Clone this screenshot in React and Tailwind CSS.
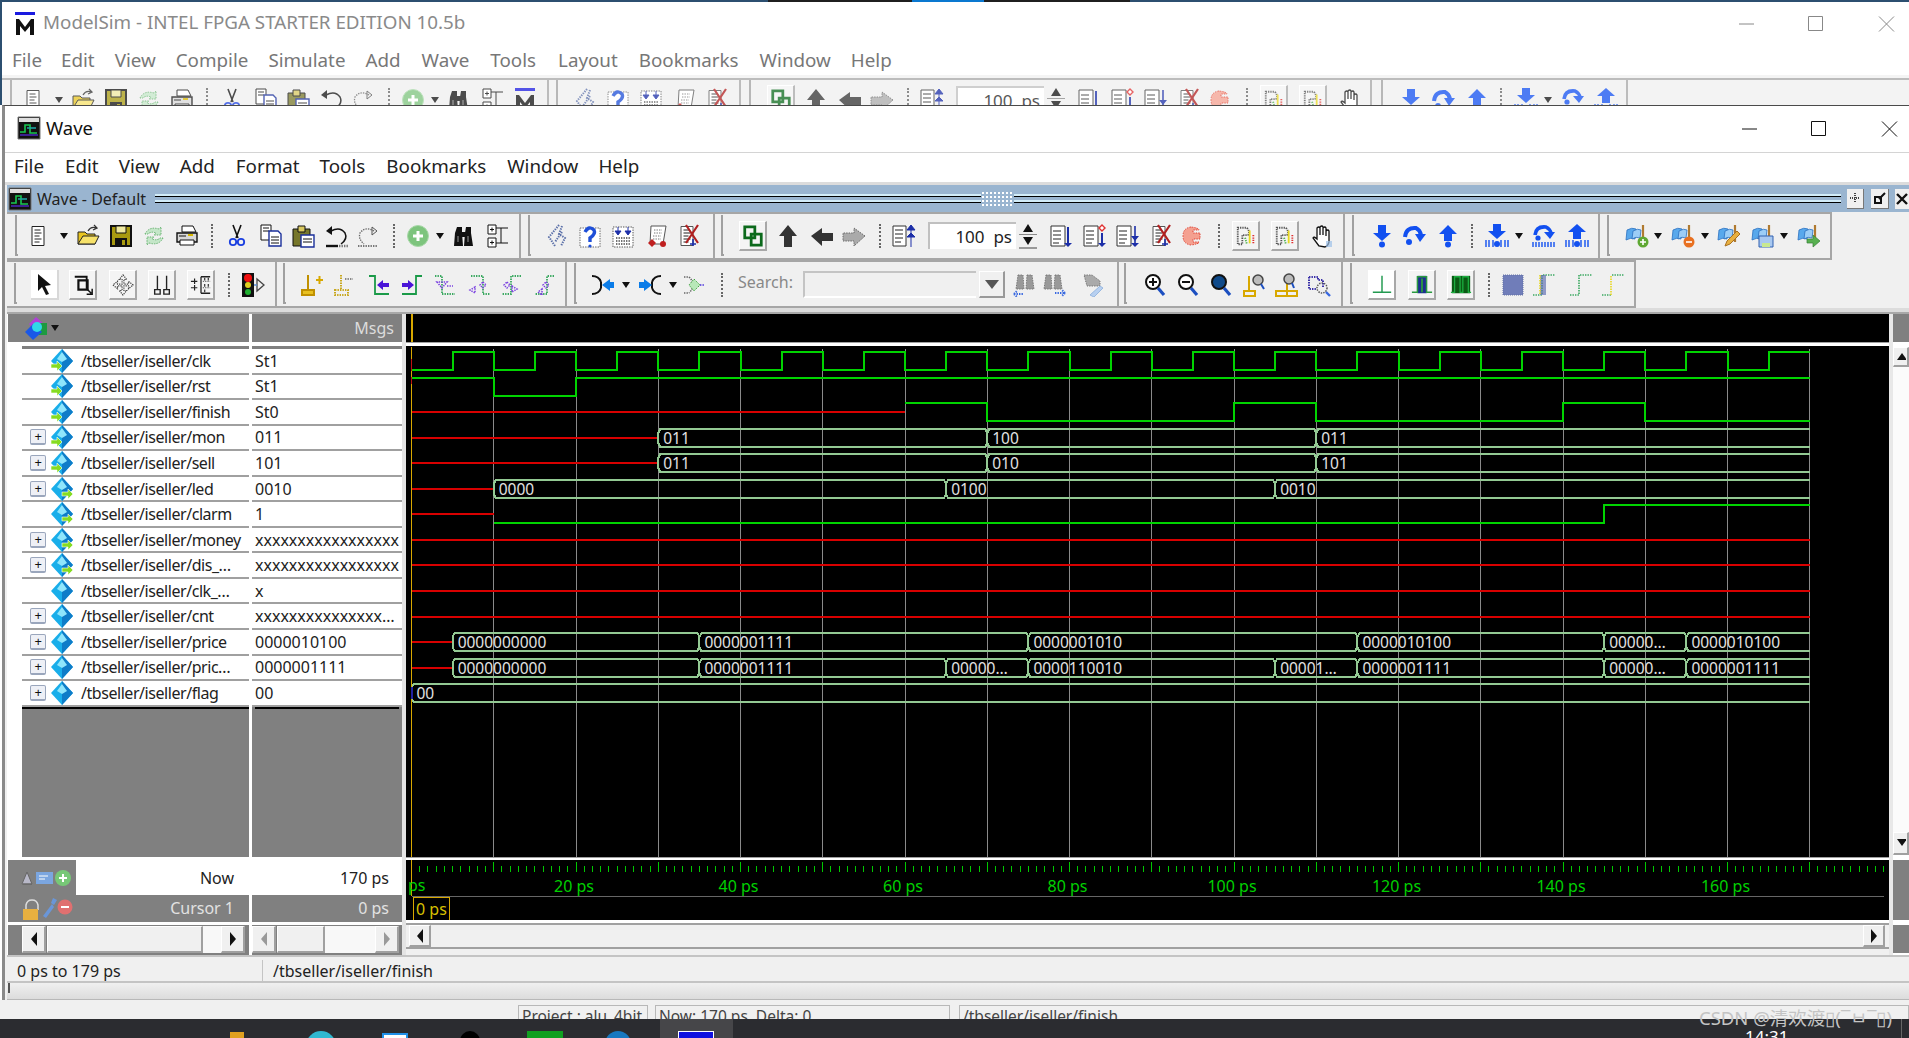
import React from "react";

const dot = { strokeDasharray: "1.4 1.1" };
const Doc = ({ s = "#222" }) => (
  <>
    <path d="M4 2.5h12v19H4z" fill="#fff" stroke={s} />
    <path d="M6.5 6h6M6.5 9h7M6.5 12h5M6.5 15h7M6.5 18h5" stroke="#222" />
  </>
);
const Dia = ({ a }) => (
  <>
    <path d="M12 0 23 12 12 24 1 12z" fill="#19aeea" />
    <path d="M12 0 23 12 12 24z" fill="#0f7cc8" />
    <path d="M12 3 17 10 12 13 7 10z" fill="#8fe6fc" />
    {a === "l" && <path d="M1 15h6v-3l5 5-5 5v-3H1z" fill="#86dc22" stroke="#fff" strokeWidth=".6" />}
    {a === "r" && <path d="M12 15h6v-3l5 5-5 5v-3h-6z" fill="#86dc22" stroke="#fff" strokeWidth=".6" />}
  </>
);
const FlagB = ({ children }) => (
  <>
    <path d="M2 6q5-3 9-1l-1 10q-4-2-9 1z" fill="#58a8ec" stroke="#2a70c0" strokeWidth=".8" />
    <path d="M8 7q5-3 8-1l-1 8q-4-2-8 1z" fill="#9ccdf6" stroke="#2a70c0" strokeWidth=".8" />
    <path d="M18 1v17" stroke="#b07a30" strokeWidth="2.2" />
    {children}
  </>
);
const Mag = ({ f = "#fff", k }) => (
  <>
    <circle cx="10" cy="9" r="7" fill={f} stroke="#111" strokeWidth="2" />
    <path d="m15 15 6 7" stroke="#1c4fc0" strokeWidth="3.2" />
    {k === "+" && <path d="M6 9h8M10 5v8" stroke="#111" strokeWidth="2" />}
    {k === "-" && <path d="M6 9h8" stroke="#111" strokeWidth="2" />}
  </>
);
const I = {
  doc: <Doc />,
  open: (
    <>
      <path d="M2 20V8h7l2 2h8v10z" fill="#e8c420" stroke="#222" />
      <path d="M2 20 7 12h16l-4 8z" fill="#f7e26a" stroke="#222" />
      <path d="M12 7q3-5 8-3m-2-3 3 3-4 2" stroke="#333" strokeWidth="1.3" />
    </>
  ),
  save: (
    <>
      <path d="M2 2h20v20H2z" fill="#a89a10" stroke="#111" strokeWidth="2" />
      <path d="M7 2h10v7H7z" fill="#efe9a0" stroke="#111" />
      <path d="M6 14h12v8H6z" fill="#111" />
      <path d="M13 16h3v5h-3z" fill="#a89a10" />
    </>
  ),
  reload: (
    <>
      <path d="M3 10q4-8 14-5l2-2v8h-7l2-2q-5-2-8 1zM21 14q-4 8-14 5l-2 2v-8h7l-2 2q5 2 8-1z" fill="#c4e6c8" stroke="#62b06c" style={dot} />
    </>
  ),
  print: (
    <>
      <path d="M7 2h11l3 6H7z" fill="#fff" stroke="#111" />
      <path d="M2 9h20v9H2z" fill="#d8d8d8" stroke="#111" strokeWidth="1.4" />
      <path d="M5 16h14v5H5z" fill="#fff" stroke="#111" />
      <path d="M13 11h5" stroke="#d8b800" strokeWidth="2" />
      <path d="M4 12h7" stroke="#111" />
    </>
  ),
  cut: (
    <>
      <path d="M8 1l5 13M16 1l-5 13" stroke="#111" strokeWidth="1.6" />
      <circle cx="8" cy="18" r="3.2" stroke="#1a3fe0" strokeWidth="1.8" />
      <circle cx="16" cy="18" r="3.2" stroke="#1a3fe0" strokeWidth="1.8" />
    </>
  ),
  copy: (
    <>
      <path d="M2 1h10v15H2z" fill="#fff" stroke="#111" />
      <path d="M4 4h6M4 7h6" stroke="#111" />
      <path d="M10 7h9l3 3v12H10z" fill="#fff" stroke="#1a2f9a" strokeWidth="1.4" />
      <path d="M12 13h8M12 16h8M12 19h8" stroke="#111" />
    </>
  ),
  paste: (
    <>
      <path d="M2 5h17v17H2z" fill="#77772a" stroke="#111" />
      <path d="M7 2h7v6H7z" fill="#d8c860" stroke="#111" />
      <path d="M10 11h13v12H10z" fill="#fff" stroke="#1a2f9a" strokeWidth="1.4" />
      <path d="M12 15h9M12 18h9" stroke="#111" />
    </>
  ),
  undo: (
    <>
      <path d="M6 7q9-5 14 2 3 6-4 11" stroke="#111" strokeWidth="1.5" />
      <path d="M7 2v9L1 7z" fill="#111" />
      <path d="M1 22h12" stroke="#111" strokeWidth="2.4" />
      <path d="M14 22h9" stroke="#777" strokeWidth="2.4" style={dot} />
    </>
  ),
  redo: (
    <>
      <path d="M18 7Q9 2 4 9q-2 6 4 11" stroke="#666" strokeWidth="1.3" style={dot} />
      <path d="m16 3 5 4-5 4z" stroke="#555" />
      <path d="M2 22h20" stroke="#777" strokeWidth="2" style={dot} />
    </>
  ),
  add: (
    <>
      <circle cx="12" cy="12" r="10.5" fill="#7dc47d" stroke="#a8d8a8" />
      <path d="M7 12h10M12 7v10" stroke="#fff" strokeWidth="3" />
    </>
  ),
  binoc: (
    <>
      <path d="M5 3h5v6l1 13H2l1-13zM14 3h5v6l2 13h-9l1-13z" fill="#111" />
      <path d="M10 8h4v5h-4z" fill="#111" />
      <path d="M6 12v6M16 12v6" stroke="#999" />
    </>
  ),
  group: (
    <>
      <path d="M3 1h8v9H3zM3 14h8v9H3z" fill="#fff" stroke="#111" />
      <path d="M5 5.5h4M7 3.5v4M5 18.5h4M7 16.5v4M11 4h12M11 19h12M16 4v15" stroke="#111" />
    </>
  ),
  sim: <path d="M13 1 3 13l6 9M16 8l-7 10M16 2l-3 8 6 4-4 8" stroke="#5a6fa8" strokeWidth="2" style={dot} />,
  q: (
    <>
      <path d="M2 4h20v19H2z" fill="#fff" stroke="#666" style={dot} />
      <path d="M7 8q4-7 9-2 2 4-4 8v4" stroke="#1e4fd8" strokeWidth="3.4" />
      <circle cx="12" cy="22" r="1.6" fill="#1e4fd8" />
    </>
  ),
  gridd: (
    <>
      <path d="M2 3h20v20H2z" fill="#fff" stroke="#555" style={dot} />
      <path d="M7 3v7M4 7l3 4 3-4zM17 3v7M14 7l3 4 3-4z" fill="#1c2fa8" stroke="#1c2fa8" />
      <path d="M5 14h15M5 17h15M5 20h15" stroke="#444" style={dot} strokeWidth="1.4" />
    </>
  ),
  docred: (
    <>
      <path d="M6 2h15l-3 18H5z" fill="#fff" stroke="#555" />
      <path d="M9 6h8M9 9h8M8 12h8M8 15h8" stroke="#777" style={dot} />
      <path d="M3 19l4-4 4 4-4 4z" fill="#c02020" />
      <circle cx="18" cy="20" r="3" fill="#c02020" />
    </>
  ),
  docx: (
    <>
      <Doc s="#555" />
      <path d="M9 1l12 18M21 1 9 19" stroke="#b02020" strokeWidth="2.2" />
      <path d="M16 15v7m-3-2h6" stroke="#1c2fa8" strokeWidth="1.6" />
    </>
  ),
  links: <path d="M3 2h11v12H3zM10 10h11v12H10z" stroke="#0c6a1c" strokeWidth="3" />,
  up: <path d="M12 1 21 12h-5v11H8V12H3z" fill="#333" />,
  left: <path d="M1 12 12 4v5h11v8H12v5z" fill="#333" />,
  right: <path d="M23 12 12 4v5H1v8h11v5z" fill="#aaa" stroke="#666" style={dot} />,
  docud: (
    <>
      <path d="M1 2h13v20H1z" fill="#fff" stroke="#333" />
      <path d="M3 6h8M3 10h8M3 14h8M3 18h6" stroke="#222" />
      <path d="M19 1v22M15 6l4-5 4 5zM15 13l4-4 4 4z" fill="#1c2fa8" stroke="#1c2fa8" />
    </>
  ),
  dl: (
    <>
      <path d="M1 2h14v20H1z" fill="#fff" stroke="#333" />
      <path d="M3 7h8M3 11h8M3 15h8M3 19h6" stroke="#222" />
      <path d="M18 3v19" stroke="#1c2fa8" strokeWidth="2" />
      <path d="M14 19h8l-4 4z" fill="#1c2fa8" />
    </>
  ),
  dr: (
    <>
      <path d="M1 2h14v20H1z" fill="#fff" stroke="#333" />
      <path d="M3 7h8M3 11h8M3 15h8M3 19h6" stroke="#222" />
      <path d="M19 9v13" stroke="#1c2fa8" strokeWidth="2" />
      <path d="M15 19h8l-4 4z" fill="#1c2fa8" />
      <path d="m19 1 3 3-3 3-3-3z" stroke="#e03030" fill="#fff" strokeWidth="1.4" />
    </>
  ),
  da: (
    <>
      <path d="M1 2h14v20H1z" fill="#fff" stroke="#333" />
      <path d="M3 7h8M3 11h8M3 15h8M3 19h6" stroke="#222" />
      <path d="M19 2v20" stroke="#1c2fa8" strokeWidth="1.6" />
      <path d="M15 12l4 5 4-5zM15 19l4 4 4-4z" fill="#1c2fa8" />
    </>
  ),
  redc: <path d="M12 3q-8 1-8 9t8 9q8-1 8-3h-6v-3h7V9h-7V6h6q0-2-8-3z" fill="#f4a090" stroke="#e04030" style={dot} />,
  dotgy: (
    <>
      <path d="M3 3h10q4 5 1 8H8v10H3z" stroke="#555" strokeWidth="2" style={dot} />
      <path d="M16 6v14" stroke="#e8d820" strokeWidth="2" />
      <path d="M20 11v10" stroke="#e03030" strokeWidth="2" style={dot} />
      <path d="M11 14l2 7" stroke="#50b050" strokeWidth="2" style={dot} />
    </>
  ),
  hand: (
    <>
      <path d="M8 22 2 14q1-2 4 1V4q2-2 3 0v7-8q2-2 3 0v8-7q2-2 3 0v8-5q2-2 3 0v11q-1 4-4 5z" fill="#fff" stroke="#111" strokeWidth="1.3" />
      <path d="M15 17h6v6h-6z" fill="#9cc0e8" opacity=".7" />
    </>
  ),
  stepd: (
    <>
      <path d="M8 1h8v8h5l-9 8-9-8h5z" fill="#1250f0" />
      <circle cx="12" cy="20.5" r="3" fill="#1250f0" />
    </>
  ),
  stepo: (
    <>
      <path d="M3 13Q4 3 14 4q4 2 5 7" stroke="#1250f0" strokeWidth="4" />
      <path d="M13 10h11l-6 8z" fill="#1250f0" />
      <circle cx="7" cy="18" r="3" fill="#1250f0" />
    </>
  ),
  stepu: (
    <>
      <path d="M12 1l9 9h-5v7H8v-7H3z" fill="#1250f0" />
      <circle cx="12" cy="20.5" r="3" fill="#1250f0" />
    </>
  ),
  stepdb: (
    <>
      <path d="M8 0h8v7h5l-9 8-9-8h5z" fill="#1250f0" />
      <circle cx="12" cy="20" r="3" fill="#1250f0" />
      <path d="M1 16v7M4 16v7M8 16v7M16 16v7M20 16v7M23 16v7" stroke="#1250f0" strokeWidth="1.4" />
    </>
  ),
  stepob: (
    <>
      <path d="M3 11Q4 2 14 3q4 2 5 6" stroke="#1250f0" strokeWidth="3.6" />
      <path d="M12 8h11l-5 7z" fill="#1250f0" />
      <circle cx="6" cy="14" r="2.6" fill="#1250f0" />
      <path d="M1 18v5M4 18v5M7 18v5M10 18v5M13 18v5M16 18v5M19 18v5M22 18v5" stroke="#1250f0" strokeWidth="1.4" />
    </>
  ),
  stepub: (
    <>
      <path d="M12 0l9 8h-5v7H8V8H3z" fill="#1250f0" />
      <circle cx="12" cy="20" r="3" fill="#1250f0" />
      <path d="M1 16v7M4 16v7M8 16v7M16 16v7M20 16v7M23 16v7" stroke="#1250f0" strokeWidth="1.4" />
    </>
  ),
  fadd: (
    <FlagB>
      <circle cx="18" cy="18" r="5.5" fill="#5ea832" />
      <path d="M15 18h6M18 15v6" stroke="#fff" strokeWidth="1.6" />
    </FlagB>
  ),
  fdel: (
    <FlagB>
      <circle cx="18" cy="18" r="5.5" fill="#e87020" />
      <path d="M15 18h6" stroke="#fff" strokeWidth="1.6" />
    </FlagB>
  ),
  fedit: (
    <FlagB>
      <path d="M8 22l2-5 10-10 3 3-10 10z" fill="#e8b040" stroke="#a87020" />
    </FlagB>
  ),
  fsave: (
    <FlagB>
      <path d="M8 12h14v11H8z" fill="#a8c8f0" stroke="#3060b0" />
      <path d="M11 19h8v4h-8z" fill="#c8e890" />
    </FlagB>
  ),
  fgo: (
    <FlagB>
      <path d="M10 15h6v-4l7 6-7 6v-4h-6z" fill="#58b050" stroke="#388038" strokeWidth=".7" />
    </FlagB>
  ),
  pointer: <path d="m6 2 0 17 4-4 4 8 3-1-4-8 6-1z" fill="#111" />,
  zbox: (
    <>
      <path d="M3 3h13v13" stroke="#111" strokeWidth="2" />
      <path d="M7 7h10v10H7z" stroke="#111" strokeWidth="2.4" />
      <path d="m16 16 5 5m1-5v6h-6" stroke="#111" strokeWidth="1.6" />
    </>
  ),
  move: <path d="m12 1 4 5h-3v5h5V8l5 4-5 4v-3h-5v5h3l-4 5-4-5h3v-5H6v3l-5-4 5-4v3h5V6H8z" stroke="#444" strokeWidth="1.3" style={dot} />,
  bars: <path d="M7 2v15M4 17h6v5H4zM17 2v15M14 17h6v5h-6z" stroke="#222" strokeWidth="1.5" />,
  cols: (
    <>
      <path d="M12 3h10M12 3v18M12 21h10" stroke="#222" strokeWidth="1.4" />
      <path d="M1 8h7M5 5v6M1 15h7M5 12v6" stroke="#222" strokeWidth="1.3" />
      <path d="M16 4v3M20 4v3M16 11v3M20 11v3M16 17v3" stroke="#444" strokeWidth="1.5" />
      <path d="M14 8h8M14 15h8" stroke="#444" style={dot} />
    </>
  ),
  traffic: (
    <>
      <path d="M1 0h12v24H1z" fill="#111" />
      <circle cx="7" cy="5" r="4" fill="#f01010" />
      <circle cx="7" cy="12" r="3" fill="#e0d020" />
      <circle cx="7" cy="19" r="3" fill="#20b030" />
      <path d="m16 6 7 6-7 6z" stroke="#444" strokeWidth="1.3" />
      <path d="M13 12h3" stroke="#6090d0" strokeWidth="1.6" />
    </>
  ),
  ins: (
    <>
      <path d="M8 2v15M2 17h12v5H2z" fill="#e8c020" stroke="#c09000" strokeWidth="2" />
      <path d="M16 7h7M19.5 3v8" stroke="#d8a800" strokeWidth="2" />
    </>
  ),
  insd: (
    <>
      <path d="M9 2v15M3 17h13v5H3z" stroke="#c8a820" strokeWidth="2" style={dot} />
      <path d="M13 6h8" stroke="#888" strokeWidth="2" style={dot} />
    </>
  ),
  bl: (
    <>
      <path d="M2 3h6v18h14" stroke="#1a9a48" strokeWidth="1.8" />
      <path d="M10 12l6-5v3h6v4h-6v3z" fill="#4a14d8" />
    </>
  ),
  br: (
    <>
      <path d="M22 3h-6v18H2" stroke="#1a9a48" strokeWidth="1.8" />
      <path d="M14 12l-6-5v3H2v4h6v3z" fill="#4a14d8" />
    </>
  ),
  d1: (
    <>
      <path d="M2 3h7v18h13" stroke="#3aa860" strokeWidth="1.8" style={dot} />
      <path d="m4 9 5 6 5-6zM14 13h6" stroke="#7a40e0" strokeWidth="1.6" style={dot} />
    </>
  ),
  d2: (
    <>
      <path d="M4 3h12v18h7" stroke="#3aa860" strokeWidth="1.8" style={dot} />
      <path d="m8 14-5 3 5 3zM16 9l3 3-3 3-3-3z" stroke="#7a40e0" strokeWidth="1.5" style={dot} />
    </>
  ),
  d3: (
    <>
      <path d="M21 3H11v18H2" stroke="#3aa860" strokeWidth="1.8" style={dot} />
      <path d="m12 13 5 3-5 3zM7 9l3 3-3 3-3-3z" stroke="#7a40e0" strokeWidth="1.5" style={dot} />
    </>
  ),
  d4: (
    <>
      <path d="M22 3h-7v18H3" stroke="#3aa860" strokeWidth="1.8" style={dot} />
      <path d="m14 9 3 3-3 3-3-3zM10 16l-4 3 4 3z" stroke="#7a40e0" strokeWidth="1.5" style={dot} />
    </>
  ),
  mergein: (
    <>
      <path d="M1 3q7 0 9 6M1 21q7 0 9-6M10 9v6" stroke="#111" strokeWidth="2" />
      <path d="M23 12l-8-6v3H11v6h4v3z" fill="#0a7ce8" transform="matrix(-1 0 0 1 34 0)" />
    </>
  ),
  mergeout: (
    <>
      <path d="M23 3q-7 0-9 6M23 21q-7 0-9-6M14 9v6" stroke="#111" strokeWidth="2" />
      <path d="M14 12 6 6v3H1v6h5v3z" fill="#0a7ce8" />
    </>
  ),
  dgreen: (
    <>
      <path d="M3 4h5M3 20h5M8 4q4 4 4 8t-4 8" stroke="#666" style={dot} strokeWidth="1.5" />
      <path d="m13 6 6 6-6 6-5-6z" fill="#b8e8b8" stroke="#40a040" style={dot} />
      <path d="M19 12h4" stroke="#7060e0" strokeWidth="2" style={dot} />
    </>
  ),
  bna: (
    <>
      <path d="M5 2h5l1 14H3zM14 2h5l2 14h-8z" fill="#999" stroke="#777" style={dot} />
      <path d="M1 21h9m-9 0 3-3m-3 3 3 3" stroke="#3868e0" strokeWidth="2" style={dot} />
    </>
  ),
  bnb: (
    <>
      <path d="M4 2h5l1 14H2zM13 2h5l2 14h-8z" fill="#999" stroke="#777" style={dot} />
      <path d="M13 20h10m0 0-3-3m3 3-3 3" stroke="#3868e0" strokeWidth="2" style={dot} />
    </>
  ),
  pen: (
    <>
      <path d="M4 2h8l8 6v5H7z" fill="#aaa" stroke="#777" style={dot} />
      <path d="M10 22l10-9 3 2-9 9z" fill="#b8d0f0" stroke="#98b8e0" />
    </>
  ),
  zin: <Mag k="+" />,
  zout: <Mag k="-" />,
  zfull: <Mag f="#0f4a8a" />,
  ya: (
    <>
      <path d="M7 3v15M2 18h11v5H2z" stroke="#d8a800" strokeWidth="2" />
      <circle cx="16" cy="7" r="5" fill="#bbb" stroke="#444" strokeWidth="1.5" />
      <path d="m19 11 3 5" stroke="#1c4fc0" strokeWidth="2" />
    </>
  ),
  yb: (
    <>
      <path d="M5 18h7v5H1v-5zM12 18h10v5H12M12 18V9" stroke="#d8a800" strokeWidth="2" />
      <circle cx="14" cy="6" r="5" fill="#bbb" stroke="#444" strokeWidth="1.5" />
      <path d="m17 10 2 5" stroke="#1c4fc0" strokeWidth="2" />
    </>
  ),
  zsel: (
    <>
      <path d="M2 4h9v3h5v7M2 4v12h7" stroke="#3a30a8" strokeWidth="2" style={dot} />
      <circle cx="15" cy="15" r="5" stroke="#555" strokeWidth="1.5" style={dot} />
      <path d="m19 19 4 4" stroke="#3868e0" strokeWidth="2.4" />
    </>
  ),
  t1: <path d="M12 2v18M2 20h20" stroke="#229a50" strokeWidth="1.6" />,
  t2: (
    <>
      <path d="M7 2h10v19H7z" fill="#1c2f90" />
      <path d="M1 20h6V3h10v17h6" stroke="#2a9a40" strokeWidth="1.6" />
      <path d="M11 5h2v15h-2z" fill="#2a9a40" />
    </>
  ),
  t3: (
    <>
      <path d="M2 2h20v19H2z" fill="#0a5a14" />
      <path d="M1 20h4V3h6v17h3V3h6v17h3" stroke="#1cae40" strokeWidth="1.4" />
    </>
  ),
  hatch: <path d="M2 2h20v20H2z" fill="#5a6ab0" stroke="#4a5a98" strokeDasharray="1 1" opacity=".85" />,
  s1: (
    <>
      <path d="M1 22h9V2h13" stroke="#3aa860" strokeWidth="1.6" style={dot} />
      <path d="M8 2h6v20H8z" fill="#5a6ab0" opacity=".65" />
      <path d="M8 2v20" stroke="#e8d820" strokeWidth="1.6" style={dot} />
    </>
  ),
  s2: <path d="M1 22h9V2h13" stroke="#3aa860" strokeWidth="1.6" style={dot} />,
  s3: (
    <>
      <path d="M1 22h9M11 2h12" stroke="#3aa860" strokeWidth="1.6" style={dot} />
      <path d="M10 22V2" stroke="#e8d820" strokeWidth="1.6" style={dot} />
    </>
  ),
  mlogo: (
    <>
      <path d="M2 0h20v3H2z" fill="#1a1ae0" />
      <path d="M3 23V7h3l6 8 6-8h3v16h-4v-9l-5 6-5-6v9z" fill="#111" />
    </>
  ),
  wave: (
    <>
      <path d="M1 1h22v22H1z" fill="#111" stroke="#777" />
      <path d="M2 2h20v4H2z" fill="#ddd" />
      <path d="M3 16h5V9h5v8h7" stroke="#18c850" strokeWidth="1.6" />
      <path d="M3 19h18" stroke="#5028c8" strokeWidth="1.4" />
      <path d="M10 12h9" stroke="#20a0a0" strokeWidth="1.6" />
    </>
  ),
  shapes: (
    <>
      <path d="M12 1 20 8 12 15 5 8z" fill="#b040d8" />
      <path d="M13 7h10v12H13z" fill="#1d9a40" />
      <path d="M9 8 18 16 9 24 1 16z" fill="#1a58e8" />
      <circle cx="13" cy="11" r="5" fill="#30d8e8" />
    </>
  ),
};

const Ic = ({ n, c = "" }) => (
  <svg className={`w-6 h-6 shrink-0 ${c}`} viewBox="0 0 24 24" fill="none" aria-hidden="true">
    {I[n]}
  </svg>
);
const Box = ({ n, c = "" }) => (
  <div className={`w-7 h-[30px] -mt-[3px] shrink-0 bg-[#f4f4f4] border border-white border-r-2 border-r-[#a8a8a8] border-b-2 border-b-[#a8a8a8] flex items-center justify-center ${c}`}>
    <svg className="w-[22px] h-[22px]" viewBox="0 0 24 24" fill="none" aria-hidden="true">
      {I[n]}
    </svg>
  </div>
);
const Arr = ({ c = "" }) => (
  <div className={`w-2.5 h-6 shrink-0 flex items-center justify-center ${c}`}>
    <svg className="w-2 h-1.5" viewBox="0 0 8 6" aria-hidden="true">
      <path d="M0 0h8L4 6z" fill="#111" />
    </svg>
  </div>
);
const Sep = ({ c = "" }) => <div className={`w-0.5 h-6 shrink-0 border-l-2 border-dotted border-[#666] ${c}`} />;
const Grip = ({ c = "" }) => (
  <div className={`w-[3px] h-[41px] shrink-0 self-end mb-[2px] border-l-2 border-b-2 border-[#a0a0a0] ${c}`} />
);
const Sec = ({ w, pt, children }) => (
  <div className={`${w} ${pt} h-full shrink-0 flex items-start bg-[#f0f0f0] border-r-2 border-b-2 border-t-2 border-[#a6a6a6]`}>{children}</div>
);
const Tri = ({ d = "l", off = false }) => (
  <svg className="w-2.5 h-4" viewBox="0 0 10 16" aria-hidden="true">
    <path d={d === "l" ? "M8 1v14L2 8z" : d === "r" ? "M2 1v14l6-7z" : d === "u" ? "M1 11h10L6 4z" : "M1 4h10l-5 7z"} fill={off ? "#999" : "#111"} />
  </svg>
);
const Btn = ({ d, off, c = "" }) => (
  <div className={`shrink-0 bg-[#f0f0f0] border border-white border-r-2 border-b-2 border-r-[#a0a0a0] border-b-[#a0a0a0] flex items-center justify-center ${c}`}>
    <Tri d={d} off={off} />
  </div>
);
const NumInput = ({ c = "" }) => (
  <>
    <div className={`w-[88px] h-[27px] -mt-[2px] shrink-0 bg-white border-t-2 border-l-2 border-[#c0c0c0] text-[17px] leading-[25px] text-right pr-[4px] text-[#222] whitespace-pre ${c}`}>100  ps</div>
    <div className="ml-[3px] w-[18px] h-[27px] -mt-[2px] shrink-0 flex flex-col">
      <div className="h-[13px] flex items-center justify-center bg-[#f0f0f0] border-b border-[#888]">
        <svg className="w-3 h-2" viewBox="0 0 12 8"><path d="M1 8h10L6 0z" fill="#111" /></svg>
      </div>
      <div className="h-[14px] flex items-center justify-center bg-[#f0f0f0] border-b-2 border-[#999]">
        <svg className="w-3 h-2" viewBox="0 0 12 8"><path d="M1 0h10L6 8z" fill="#111" /></svg>
      </div>
    </div>
  </>
);

const G1 = () => (
  <>
    <Grip c="ml-[8px]" />
    <Ic n="doc" c="ml-[10px]" />
    <Arr c="ml-[7px]" />
    <Ic n="open" c="ml-[7px]" />
    <Ic n="save" c="ml-[9px]" />
    <Ic n="reload" c="ml-[9px]" />
    <Ic n="print" c="ml-[9px]" />
    <Sep c="ml-[12px]" />
    <Ic n="cut" c="ml-[12px]" />
    <Ic n="copy" c="ml-[10px]" />
    <Ic n="paste" c="ml-[8px]" />
    <Ic n="undo" c="ml-[10px]" />
    <Ic n="redo" c="ml-[7px]" />
    <Sep c="ml-[13px]" />
    <Ic n="add" c="ml-[11px]" />
    <Arr c="ml-[5px]" />
    <Ic n="binoc" c="ml-[7px]" />
    <Ic n="group" c="ml-[9px]" />
  </>
);
const G2 = () => (
  <>
    <Grip c="ml-[7px]" />
    <Ic n="sim" c="ml-[15px]" />
    <Ic n="q" c="ml-[8px]" />
    <Ic n="gridd" c="ml-[9px]" />
    <Ic n="docred" c="ml-[10px]" />
    <Ic n="docx" c="ml-[8px]" />
  </>
);
const G3 = () => (
  <>
    <Grip c="ml-[6px]" />
    <Box n="links" c="ml-[15px]" />
    <Ic n="up" c="ml-[9px]" />
    <Ic n="left" c="ml-[10px]" />
    <Ic n="right" c="ml-[8px]" />
    <Sep c="ml-[13px]" />
    <Ic n="docud" c="ml-[11px]" />
    <div className="ml-[12px] flex items-start">
      <NumInput />
    </div>
    <Ic n="dl" c="ml-[13px]" />
    <Ic n="dr" c="ml-[9px]" />
    <Ic n="da" c="ml-[9px]" />
    <Ic n="docx" c="ml-[9px]" />
    <Ic n="redc" c="ml-[6px]" />
    <Sep c="ml-[15px]" />
    <Box n="dotgy" c="ml-[12px]" />
    <Box n="dotgy" c="ml-[11px]" />
    <Ic n="hand" c="ml-[12px]" />
  </>
);
const G4 = () => (
  <>
    <Grip c="ml-[7px]" />
    <Ic n="stepd" c="ml-[15px]" />
    <Ic n="stepo" c="ml-[8px]" />
    <Ic n="stepu" c="ml-[10px]" />
    <Sep c="ml-[11px]" />
    <Ic n="stepdb" c="ml-[12px]" />
    <Arr c="ml-[5px]" />
    <Ic n="stepob" c="ml-[8px]" />
    <Ic n="stepub" c="ml-[9px]" />
  </>
);

const signals = [
  ["/tbseller/iseller/clk", "St1", "l", false],
  ["/tbseller/iseller/rst", "St1", "l", false],
  ["/tbseller/iseller/finish", "St0", "l", false],
  ["/tbseller/iseller/mon", "011", "l", true],
  ["/tbseller/iseller/sell", "101", "l", true],
  ["/tbseller/iseller/led", "0010", "r", true],
  ["/tbseller/iseller/clarm", "1", "r", false],
  ["/tbseller/iseller/money", "xxxxxxxxxxxxxxxxx", "r", true],
  ["/tbseller/iseller/dis_…", "xxxxxxxxxxxxxxxxx", "r", true],
  ["/tbseller/iseller/clk_…", "x", "", false],
  ["/tbseller/iseller/cnt", "xxxxxxxxxxxxxxx…", "", true],
  ["/tbseller/iseller/price", "0000010100", "", true],
  ["/tbseller/iseller/pric…", "0000001111", "", true],
  ["/tbseller/iseller/flag", "00", "", true],
];

const X = (t) => 5.5 + 8.225 * t;
const Yc = (i) => Math.round(15 + 25.55 * i);
const GREEN = "#00d400";
const RED = "#d80000";
const BUS = "#93c993";

function digital(i, pts, endT = 170) {
  const y = Yc(i);
  const lv = (v) => (v ? y - 9 : y + 9);
  let d = "";
  pts.forEach(([t, v], k) => {
    const next = k + 1 < pts.length ? pts[k + 1][0] : endT;
    d += `${k === 0 ? "M" : "V"}${k === 0 ? X(t) + " " + lv(v) : lv(v)}H${X(next)}`;
  });
  return d;
}
const clkPts = [[0, 0]];
for (let t = 5; t < 170; t += 5) clkPts.push([t, (t / 5) % 2 === 1 ? 1 : 0]);

const buses = [
  [3, 30, [[30, "011"], [70, "100"], [110, "011"]]],
  [4, 30, [[30, "011"], [70, "010"], [110, "101"]]],
  [5, 10, [[10, "0000"], [65, "0100"], [105, "0010"]]],
  [11, 5, [[5, "0000000000"], [35, "0000001111"], [75, "0000001010"], [115, "0000010100"], [145, "00000…"], [155, "0000010100"]]],
  [12, 5, [[5, "0000000000"], [35, "0000001111"], [65, "00000…"], [75, "0000110010"], [105, "00001…"], [115, "0000001111"], [145, "00000…"], [155, "0000001111"]]],
  [13, 0, [[0, "00"]]],
];
const gridT = Array.from({ length: 17 }, (_, k) => (k + 1) * 10);

const Waves = () => (
  <svg className="w-full h-full block" viewBox="0 0 1483 511" fill="none" shapeRendering="crispEdges">
    {gridT.map((t) => (
      <path key={t} d={`M${X(t)} 3V511`} stroke="#8a8a8a" />
    ))}
    <path d={digital(0, clkPts)} stroke={GREEN} strokeWidth="2" />
    <path d={digital(1, [[0, 1], [10, 0], [20, 1]])} stroke={GREEN} strokeWidth="2" />
    <path d={`M${X(0)} ${Yc(2)}H${X(60)}`} stroke={RED} strokeWidth="2" />
    <path d={digital(2, [[60, 1], [70, 0], [100, 1], [110, 0], [140, 1], [150, 0]])} stroke={GREEN} strokeWidth="2" />
    {[[3, 30], [4, 30], [5, 10], [6, 10], [7, 170], [8, 170], [9, 170], [10, 170], [11, 5], [12, 5]].map(([i, t]) => (
      <path key={i} d={`M${X(0)} ${Yc(i)}H${X(t)}`} stroke={RED} strokeWidth="2" />
    ))}
    <path d={digital(6, [[10, 0], [145, 1]])} stroke={GREEN} strokeWidth="2" />
    {buses.map(([i, , segs]) =>
      segs.map(([t, label], k) => {
        const e = k + 1 < segs.length ? segs[k + 1][0] : 170;
        const y = Yc(i);
        const x0 = X(t);
        const x1 = X(e);
        const last = k + 1 === segs.length;
        const d = last
          ? `M${x1} ${y - 9}H${x0 + 2}L${x0} ${y - 5}V${y + 5}L${x0 + 2} ${y + 9}H${x1}`
          : `M${x0 + 2} ${y - 9}H${x1 - 2}L${x1} ${y - 5}V${y + 5}L${x1 - 2} ${y + 9}H${x0 + 2}L${x0} ${y + 5}V${y - 5}Z`;
        return (
          <g key={t}>
            <path d={d} stroke={BUS} strokeWidth="2" />
            <text x={x0 + 5} y={y + 6} fontSize="15.5" fill="#e2e2e2" shapeRendering="auto">
              {label}
            </text>
          </g>
        );
      })
    )}
    <path d={`M${X(0)} 1V511`} stroke="#d8a800" strokeWidth="1.5" />
    <path d={`M${X(0)} ${Yc(0) - 2}V${Yc(0) + 10}M${X(0)} ${Yc(1) - 10}V${Yc(1) - 3}`} stroke="#c01010" strokeWidth="1.5" />
    <path d={`M${X(0)} ${Yc(13) - 6}V${Yc(13) + 6}`} stroke="#2020a0" strokeWidth="2" />
  </svg>
);

const rulerMinor = Array.from({ length: 179 }, (_, k) => k + 1);
const rulerLabels = [20, 40, 60, 80, 100, 120, 140, 160];
const Ruler = () => (
  <svg className="w-full h-full block bg-black" viewBox="0 0 1483 60" fill="none" shapeRendering="crispEdges">
    {rulerMinor.map((t) => (
      <path key={t} d={t % 10 === 0 ? `M${X(t)} 2V12` : `M${X(t)} 6V12`} stroke="#00c800" />
    ))}
    <path d={`M${X(0)} 36H1478`} stroke="#666" />
    <path d={`M${X(0)} 0V36`} stroke="#d8a800" strokeWidth="1.5" />
    <text x="2" y="31" fontSize="16" fill="#00d000" shapeRendering="auto">ps</text>
    {rulerLabels.map((t) => (
      <text key={t} x={X(t) - 2} y="32" textAnchor="middle" fontSize="16" fill="#00d000" shapeRendering="auto">
        {t} ps
      </text>
    ))}
    <rect x="7.5" y="37.5" width="36" height="23" stroke="#d8a800" />
    <text x="10" y="55" fontSize="16" fill="#d8c000" shapeRendering="auto">0 ps</text>
  </svg>
);

const MiniIcons = ({ row }) =>
  row === 0 ? (
    <svg className="w-[54px] h-[24px]" viewBox="0 0 54 24" fill="none" aria-hidden="true">
      <path d="M3 18 8 6l5 12zM4 18h9" fill="#b8b8c8" stroke="#666" />
      <path d="M17 6h17v12H17z" fill="#7ba6e0" />
      <path d="M20 10h9M20 13h6" stroke="#fff" />
      <circle cx="44" cy="12" r="8" fill="#77c877" />
      <path d="M40 12h8M44 8v8" stroke="#fff" strokeWidth="2" />
    </svg>
  ) : (
    <svg className="w-[54px] h-[26px]" viewBox="0 0 54 26" fill="none" aria-hidden="true">
      <path d="M7 14v-5q1-5 6-5t6 5v5" stroke="#ddd" strokeWidth="1.5" />
      <path d="M4 13h15v11H4z" fill="#e8b040" />
      <path d="M34 2l-2 5 3 2 3-5zM33 8 24 20l3 2 8-11" fill="#6a96d8" />
      <circle cx="46" cy="11" r="7.5" fill="#e07070" />
      <path d="M42 11h8" stroke="#fff" strokeWidth="2" />
    </svg>
  );

const taskIcon = (
  <svg className="w-[36px] h-[8px]" viewBox="0 0 36 8"><path d="M0 0h36v8H0z" fill="#1010e0" stroke="#fff" strokeWidth="2" /></svg>
);

const Menu = ({ items }) => (
  <>
    {items.map(([t, ml]) => (
      <span key={t} className={ml}>
        {t}
      </span>
    ))}
  </>
);
const WinBtns = ({ color, first }) => (
  <svg className={`w-[158px] h-[16px] shrink-0 ${first}`} viewBox="0 0 158 16" fill="none" stroke={color} aria-hidden="true">
    <path d="M0 8h15M69.5 .5h14v14h-14zM140 .5l15 15M155 .5l-15 15" />
  </svg>
);

export default function App() {
  return (
    <div className="relative w-[1909px] h-[1038px] overflow-hidden bg-white flex flex-col [font-family:'Noto_Sans','Noto_Sans_CJK_SC',sans-serif]">
      {/* desktop strip */}
      <div className="h-[2px] shrink-0 flex bg-[#2c4f70]">
        <div className="w-[768px]" />
        <div className="w-[144px] bg-[#1f1f1f]" />
        <div className="w-[72px] bg-[#0a78d0]" />
        <div className="w-[146px] bg-[#1f1f1f]" />
      </div>
      {/* ModelSim window */}
      <div className="h-[43px] shrink-0 flex items-center bg-white border-l-2 border-[#2c4f70]">
        <Ic n="mlogo" c="ml-[11px] !w-[24px]" />
        <span className="ml-[6px] -mt-[2px] text-[18.8px] text-[#8a8a8a] whitespace-nowrap">ModelSim - INTEL FPGA STARTER EDITION 10.5b</span>
        <WinBtns color="#888" first="ml-auto mr-[12px]" />
      </div>
      <div className="h-[30px] shrink-0 flex items-center bg-white border-l-2 border-[#2c4f70] text-[18.8px] text-[#777] whitespace-nowrap">
        <Menu
          items={[
            ["File", "ml-[10px]"],
            ["Edit", "ml-[19px]"],
            ["View", "ml-[20px]"],
            ["Compile", "ml-[20px]"],
            ["Simulate", "ml-[20px]"],
            ["Add", "ml-[20px]"],
            ["Wave", "ml-[21px]"],
            ["Tools", "ml-[21px]"],
            ["Layout", "ml-[22px]"],
            ["Bookmarks", "ml-[21px]"],
            ["Window", "ml-[21px]"],
            ["Help", "ml-[20px]"],
          ]}
        />
      </div>
      <div className="h-[30px] shrink-0 overflow-hidden bg-white border-l-2 border-[#2c4f70] flex flex-col">
        <div className="h-[3px] shrink-0 bg-[#f4f4f4]" />
        <div className="flex h-[47px] shrink-0 opacity-75">
          <Sec w="w-[547px]" pt="pt-[8px]">
            <G1 />
            <Ic n="mlogo" c="ml-[9px]" />
          </Sec>
          <Sec w="w-[192px]" pt="pt-[8px]">
            <G2 />
          </Sec>
          <Sec w="w-[631px]" pt="pt-[8px]">
            <div className="w-[2px] shrink-0" />
            <G3 />
          </Sec>
          <Sec w="w-[256px]" pt="pt-[8px]">
            <div className="w-[2px] shrink-0" />
            <G4 />
          </Sec>
          <div className="flex-1 bg-[#f0f0f0] border-t-2 border-[#a6a6a6]" />
        </div>
      </div>
      {/* Wave window */}
      <div className="h-[896px] shrink-0 flex flex-col bg-white border-t border-[#4a4a4a] border-l-[3px] border-l-[#8a8a8a] ml-[2px] -mb-px">
        <div className="h-[46px] shrink-0 flex items-center">
          <Ic n="wave" c="ml-[12px] -mt-[2px]" />
          <span className="ml-[5px] -mt-[2px] text-[18.5px] text-[#111]">Wave</span>
          <WinBtns color="#111" first="ml-auto mr-[9px]" />
        </div>
        <div className="h-[30px] shrink-0 flex items-center border-t border-[#d4d4d4] text-[18.8px] text-[#222] whitespace-nowrap pb-[3px]">
          <Menu
            items={[
              ["File", "ml-[9px]"],
              ["Edit", "ml-[21px]"],
              ["View", "ml-[20px]"],
              ["Add", "ml-[20px]"],
              ["Format", "ml-[21px]"],
              ["Tools", "ml-[20px]"],
              ["Bookmarks", "ml-[21px]"],
              ["Window", "ml-[21px]"],
              ["Help", "ml-[20px]"],
            ]}
          />
        </div>
        <div className="flex-1 min-h-0 flex flex-col pl-[2px] bg-[#f0f0f0] border-t-[3px] border-[#dcdcdc]">
          {/* Docked title */}
          <div className="h-[27px] shrink-0 flex items-center bg-[#9ab5d0]">
            <Ic n="wave" c="ml-[1px] !w-[24px]" />
            <span className="ml-[5px] text-[16px] text-[#222] whitespace-nowrap">Wave - Default</span>
            <div className="ml-[9px] flex items-center w-[826px] h-[15px] shrink-0 flex-col justify-center gap-[3px]">
              <div className="w-full h-[3px] bg-[#d2ecf8] border-b border-black" />
              <div className="w-full h-[3px] bg-[#d2ecf8] border-b border-black" />
            </div>
            <div className="w-[33px] h-[15px] shrink-0 bg-[radial-gradient(#fff_1px,#9ab5d0_1px)] bg-[length:4px_4px]" />
            <div className="flex items-center w-[827px] h-[15px] shrink-0 flex-col justify-center gap-[3px]">
              <div className="w-full h-[3px] bg-[#d2ecf8] border-b border-black" />
              <div className="w-full h-[3px] bg-[#d2ecf8] border-b border-black" />
            </div>
            <div className="ml-[6px] w-[17px] h-[20px] shrink-0 bg-[#f0f0f0] border-r border-b border-[#777] flex items-center justify-center">
              <svg className="w-3 h-3" viewBox="0 0 12 12" fill="none"><path d="M6 1v10M1 6h10" stroke="#444" strokeDasharray="1 1" strokeWidth="2" /></svg>
            </div>
            <div className="ml-[7px] w-[18px] h-[20px] shrink-0 bg-[#f0f0f0] border-r border-b border-[#777] flex items-center justify-center">
              <svg className="w-3 h-3" viewBox="0 0 12 12" fill="none"><path d="M1 5h6v6H1zM5 7l6-6" stroke="#111" strokeWidth="2" /></svg>
            </div>
            <div className="ml-[6px] flex-1 h-[20px] bg-[#f0f0f0] flex items-center justify-center overflow-hidden">
              <svg className="w-3 h-3 shrink-0" viewBox="0 0 12 12" fill="none"><path d="m1 1 10 10M11 1 1 11" stroke="#111" strokeWidth="2.4" /></svg>
            </div>
          </div>
          {/* Toolbar row 1 */}
          <div className="h-[48px] shrink-0 flex">
            <Sec w="w-[514px]" pt="pt-[10px]"><G1 /></Sec>
            <Sec w="w-[194px]" pt="pt-[10px]"><G2 /></Sec>
            <Sec w="w-[630px]" pt="pt-[10px]"><G3 /></Sec>
            <Sec w="w-[255px]" pt="pt-[10px]"><G4 /></Sec>
            <Sec w="w-[232px]" pt="pt-[10px]">
              <Grip c="ml-[7px]" />
              <Ic n="fadd" c="ml-[15px]" />
              <Arr c="ml-[4px]" />
              <Ic n="fdel" c="ml-[8px]" />
              <Arr c="ml-[5px]" />
              <Ic n="fedit" c="ml-[7px]" />
              <Ic n="fsave" c="ml-[10px]" />
              <Arr c="ml-[4px]" />
              <Ic n="fgo" c="ml-[8px]" />
            </Sec>
          </div>
          {/* Toolbar row 2 */}
          <div className="h-[48px] shrink-0 flex">
            <Sec w="w-[270px]" pt="pt-[11px]">
              <Grip c="ml-[7px]" />
              <div className="ml-[14px] w-7 h-[30px] -mt-[3px] shrink-0 bg-white border-r-2 border-b-2 border-[#d8d8d8] flex items-center justify-center"><Ic n="pointer" /></div>
              <Box n="zbox" c="ml-[10px]" />
              <Box n="move" c="ml-[12px]" />
              <Box n="bars" c="ml-[11px]" />
              <Box n="cols" c="ml-[11px]" />
              <Sep c="ml-[13px]" />
              <Ic n="traffic" c="ml-[11px]" />
            </Sec>
            <Sec w="w-[290px]" pt="pt-[11px]">
              <Grip c="ml-[6px]" />
              <Ic n="ins" c="ml-[14px]" />
              <Ic n="insd" c="ml-[8px]" />
              <Ic n="bl" c="ml-[11px]" />
              <Ic n="br" c="ml-[9px]" />
              <Ic n="d1" c="ml-[9px]" />
              <Ic n="d2" c="ml-[10px]" />
              <Ic n="d3" c="ml-[9px]" />
              <Ic n="d4" c="ml-[8px]" />
            </Sec>
            <Sec w="w-[552px]" pt="pt-[11px]">
              <Grip c="ml-[7px]" />
              <Ic n="mergein" c="ml-[14px]" />
              <Arr c="ml-[6px]" />
              <Ic n="mergeout" c="ml-[7px]" />
              <Arr c="ml-[6px]" />
              <Ic n="dgreen" c="ml-[3px]" />
              <Sep c="ml-[16px]" />
              <span className="ml-[15px] -mt-[3px] w-[56px] shrink-0 text-[16px] leading-6 text-[#888]">Search:</span>
              <div className="ml-[9px] w-[173px] h-[27px] -mt-[2px] shrink-0 bg-[#f0f0f0] border-t-2 border-l-2 border-[#c4c4c4] border-b-2 border-b-white" />
              <div className="ml-[3px] w-[26px] h-[27px] -mt-[2px] shrink-0 bg-[#f0f0f0] border border-white border-r-2 border-b-2 border-r-[#999] border-b-[#999] flex items-center justify-center">
                <svg className="w-4 h-3" viewBox="0 0 16 12"><path d="M1 2h14L8 11z" fill="#555" /></svg>
              </div>
              <Ic n="bna" c="ml-[8px]" />
              <Ic n="bnb" c="ml-[5px]" />
              <Ic n="pen" c="ml-[14px]" />
            </Sec>
            <Sec w="w-[224px]" pt="pt-[11px]">
              <Grip c="ml-[5px]" />
              <Ic n="zin" c="ml-[16px]" />
              <Ic n="zout" c="ml-[9px]" />
              <Ic n="zfull" c="ml-[9px]" />
              <Ic n="ya" c="ml-[9px]" />
              <Ic n="yb" c="ml-[9px]" />
              <Ic n="zsel" c="ml-[8px]" />
            </Sec>
            <Sec w="w-[293px]" pt="pt-[11px]">
              <Grip c="ml-[7px]" />
              <Box n="t1" c="ml-[15px] !bg-white" />
              <Box n="t2" c="ml-[12px]" />
              <Box n="t3" c="ml-[11px]" />
              <Sep c="ml-[13px]" />
              <Ic n="hatch" c="ml-[11px]" />
              <Ic n="s1" c="ml-[7px]" />
              <Ic n="s2" c="ml-[13px]" />
              <Ic n="s3" c="ml-[8px]" />
            </Sec>
          </div>
          <div className="h-[6px] shrink-0 bg-[#dcdcdc] border-b-2 border-[#a8a8a8]" />
          {/* Panes */}
          <div className="h-[641px] shrink-0 flex bg-white">
            {/* names */}
            <div className="w-[241px] shrink-0 ml-[1px] flex flex-col">
              <div className="h-[28px] shrink-0 bg-[#808080] flex items-center">
                <Ic n="shapes" c="ml-[16px]" />
                <Arr c="ml-[2px]" />
              </div>
              <div className="h-[4px] shrink-0 bg-white" />
              <div className="h-[511px] shrink-0 flex">
                <div className="w-[14px] shrink-0 bg-white" />
                <div className="flex-1 flex flex-col bg-[#808080]">
                  <div className="h-[3px] shrink-0" />
                  {signals.map(([name, , dir, plus]) => (
                    <div key={name} className="h-[25.55px] shrink-0 bg-white border-b-2 border-[#a0a0a0] flex items-center text-[16px] tracking-[-0.45px] text-[#222] whitespace-nowrap">
                      {plus ? (
                        <div className="ml-[8px] w-[16px] h-[16px] shrink-0 rounded-[2px] bg-[#eef0f6] border border-[#9aa6bc] border-b-2 flex items-center justify-center text-[13px] leading-none text-[#111]">+</div>
                      ) : (
                        <div className="ml-[8px] w-[16px] shrink-0" />
                      )}
                      <svg className="w-6 h-6 shrink-0 ml-[4px]" viewBox="0 0 24 24" fill="none" aria-hidden="true">
                        <Dia a={dir} />
                      </svg>
                      <span className="ml-[7px]">{name}</span>
                    </div>
                  ))}
                  <div className="h-[2px] shrink-0 bg-black" />
                </div>
              </div>
              <div className="h-[3px] shrink-0 bg-white" />
              <div className="h-[35px] shrink-0 flex">
                <div className="w-[68px] shrink-0 bg-[#808080] flex items-center justify-end pr-[3px]"><MiniIcons row={0} /></div>
                <div className="flex-1 bg-white text-right pr-[15px] text-[16px] leading-[36px] text-[#222]">Now</div>
              </div>
              <div className="h-[27px] shrink-0 flex bg-[#808080]">
                <div className="w-[68px] shrink-0 flex items-center justify-end pr-[3px]"><MiniIcons row={1} /></div>
                <div className="flex-1 text-right pr-[15px] text-[16px] leading-[27px] text-[#e2e2e2]">Cursor 1</div>
              </div>
              <div className="h-[3px] shrink-0 bg-white" />
              <div className="h-[30px] shrink-0 bg-[#808080] flex items-start pt-[1px] pl-[14px]">
                <Btn d="l" c="w-[24px] h-[27px]" />
                <div className="ml-[1px] w-[156px] h-[27px] bg-[#f0f0f0] border border-white border-r-2 border-b-2 border-r-[#a0a0a0] border-b-[#a0a0a0]" />
                <div className="w-[18px] h-[27px] bg-[#f8f8f8]" />
                <Btn d="r" c="w-[24px] h-[27px]" />
              </div>
            </div>
            <div className="w-[3px] shrink-0 bg-white" />
            {/* values */}
            <div className="w-[150px] shrink-0 flex flex-col">
              <div className="h-[28px] shrink-0 bg-[#808080] text-right pr-[8px] text-[16px] leading-[28px] text-[#dcdcdc]">Msgs</div>
              <div className="h-[4px] shrink-0 bg-white" />
              <div className="h-[511px] shrink-0 flex flex-col bg-[#808080]">
                <div className="h-[3px] shrink-0" />
                {signals.map(([name, val]) => (
                  <div key={name} className="h-[25.55px] shrink-0 bg-white border-b-2 border-[#a0a0a0] flex items-center pl-[3px] text-[16px] text-[#222] whitespace-nowrap overflow-hidden">
                    {val}
                  </div>
                ))}
                <div className="h-[2px] shrink-0 mx-[3px] bg-black" />
              </div>
              <div className="h-[3px] shrink-0 bg-white" />
              <div className="h-[35px] shrink-0 bg-white text-right pr-[13px] text-[16px] leading-[36px] text-[#222]">170 ps</div>
              <div className="h-[27px] shrink-0 bg-[#808080] text-right pr-[13px] text-[16px] leading-[27px] text-[#e2e2e2]">0 ps</div>
              <div className="h-[3px] shrink-0 bg-white" />
              <div className="h-[30px] shrink-0 bg-[#808080] flex items-start pt-[1px]">
                <Btn d="l" off c="w-[24px] h-[27px]" />
                <div className="ml-[1px] w-[48px] h-[27px] bg-[#f0f0f0] border border-white border-r-2 border-b-2 border-r-[#a0a0a0] border-b-[#a0a0a0]" />
                <div className="w-[50px] h-[27px] bg-[#f8f8f8]" />
                <Btn d="r" off c="w-[24px] h-[27px]" />
              </div>
            </div>
            <div className="w-[4px] shrink-0 bg-[#e4e4e4]" />
            {/* wave */}
            <div className="w-[1483px] shrink-0 flex flex-col">
              <div className="h-[28px] shrink-0 bg-black relative">
                <div className="absolute left-[5px] top-0 w-[2px] h-full bg-[#d8a800]" />
              </div>
              <div className="h-[4px] shrink-0 bg-white border-t border-[#a0a0a0]" />
              <div className="h-[511px] shrink-0 bg-black"><Waves /></div>
              <div className="h-[3px] shrink-0 bg-white border-t border-[#a0a0a0]" />
              <div className="h-[60px] shrink-0"><Ruler /></div>
              <div className="h-[5px] shrink-0 bg-white border-b-2 border-[#a0a0a0]" />
              <div className="h-[24px] shrink-0 flex items-center bg-[#f0f0f0] border-b-2 border-[#a0a0a0] pl-[3px]">
                <Btn d="l" c="w-[22px] h-[22px]" />
                <div className="flex-1" />
                <Btn d="r" c="w-[22px] h-[22px] mr-[4px]" />
              </div>
              <div className="h-[6px] shrink-0 bg-[#f0f0f0]" />
            </div>
            {/* right scrollbar */}
            <div className="flex-1 flex flex-col bg-[#f8f8f8] border-l-4 border-[#e8e8e8]">
              <div className="h-[28px] shrink-0 bg-[#808080]" />
              <div className="h-[5px] shrink-0 bg-white" />
              <Btn d="u" c="h-[20px]" />
              <div className="flex-1 bg-[#fbfbfb]" />
              <Btn d="d" c="h-[23px]" />
              <div className="h-[5px] shrink-0 bg-white" />
              <div className="h-[60px] shrink-0 bg-[#808080]" />
              <div className="h-[5px] shrink-0 bg-white" />
              <div className="h-[28px] shrink-0 bg-[#808080]" />
              <div className="h-[2px] shrink-0 bg-white" />
            </div>
          </div>
          {/* status */}
          <div className="h-[28px] shrink-0 flex items-center bg-[#f0f0f0] border-t-2 border-b-2 border-[#c4c4c4] text-[16px] text-[#222] whitespace-nowrap pt-[3px]">
            <span className="ml-[10px] w-[245px] shrink-0">0 ps to 179 ps</span>
            <div className="w-px h-full shrink-0 bg-[#c4c4c4]" />
            <span className="ml-[10px]">/tbseller/iseller/finish</span>
          </div>
          <div className="flex-1 min-h-0 bg-gradient-to-b from-[#f0f0f0] to-[#dcdcdc] border-b-2 border-[#b8b8b8] flex">
            <div className="ml-px w-[2px] h-[10px] bg-[#555]" />
          </div>
        </div>
      </div>
      {/* outer status */}
      <div className="h-[19px] shrink-0 overflow-hidden bg-[#f0f0f0] flex items-start pt-[5px] text-[15.5px] leading-[20px] text-[#444] whitespace-pre">
        <div className="ml-[518px] w-[130px] h-[30px] shrink-0 border border-[#b8b8b8] pl-[3px]">Project : alu_4bit</div>
        <div className="ml-[7px] w-[295px] h-[30px] shrink-0 border border-[#b8b8b8] pl-[3px]">Now: 170 ps  Delta: 0</div>
        <div className="ml-[9px] flex-1 h-[30px] border border-[#b8b8b8] pl-[3px]">/tbseller/iseller/finish</div>
      </div>
      {/* taskbar */}
      <div className="flex-1 bg-[#2b2c30] flex items-start overflow-hidden text-white">
        <div className="ml-[230px] mt-[13px] w-[14px] h-[8px] shrink-0 bg-[#e0a020]" />
        <div className="ml-[62px] mt-[12px] w-[30px] h-[30px] shrink-0 rounded-full bg-[#30b8d0]" />
        <div className="ml-[46px] mt-[14px] w-[26px] h-[12px] shrink-0 border-2 border-[#2090e8] bg-white" />
        <div className="ml-[52px] mt-[12px] w-[20px] h-[20px] shrink-0 rounded-full bg-black" />
        <div className="ml-[47px] mt-[12px] w-[36px] h-[12px] shrink-0 bg-[#10a020]" />
        <div className="ml-[42px] mt-[12px] w-[26px] h-[26px] shrink-0 rounded-full bg-[#1878c0]" />
        <div className="ml-[29px] w-[73px] h-full shrink-0 bg-[#464649] pl-[18px] pt-[12px]">{taskIcon}</div>
        <span className="ml-[1012px] mt-[6px] text-[17px] leading-[24px] shrink-0">14:31</span>
        <div className="ml-auto mr-[7px] w-px h-full bg-[#666]" />
      </div>
      <span className="absolute left-[1699px] top-[1005px] text-[18.5px] leading-[26px] text-[#c4c4c4] whitespace-nowrap">CSDN @清欢渡▯(¯ㅂ¯▯)</span>
    </div>
  );
}
